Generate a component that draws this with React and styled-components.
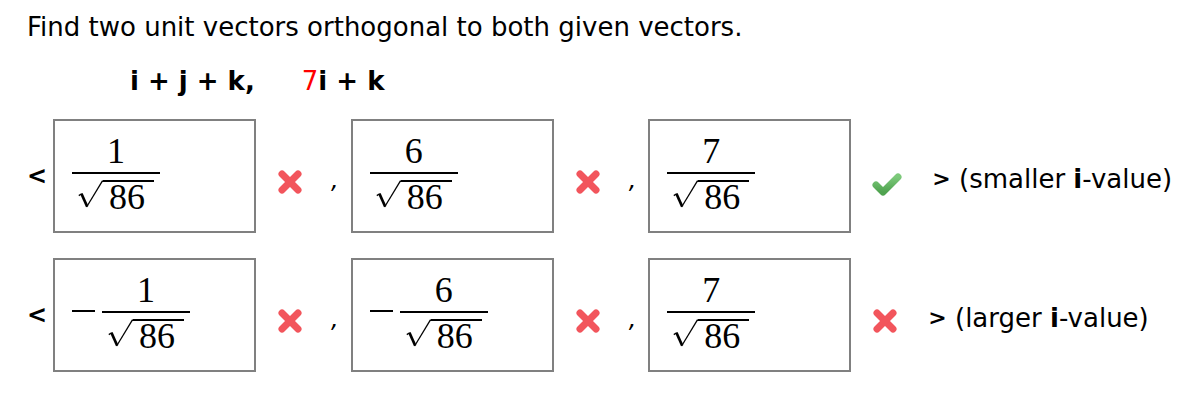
import React from "react";
import styled, { createGlobalStyle } from "styled-components";

const Global = createGlobalStyle`
  html, body { margin: 0; padding: 0; background: #fff; }
  body { font-family: "DejaVu Sans", Verdana, sans-serif; color: #000; }
`;

const Page = styled.div`
  padding: 12px 0 0 27px;
`;

const Prompt = styled.div`
  font-size: 26px;
  line-height: 30px;
`;

const Given = styled.div`
  margin-top: 24px;
  padding-left: 103px;
  font-size: 26px;
  line-height: 30px;
  font-weight: bold;
  white-space: pre;
`;

const Red = styled.span`
  color: #ff0000;
  font-weight: normal;
  margin-left: ${(p) => p.ml}px;
`;

const Rows = styled.div`
  margin-top: 23px;
  display: flex;
  flex-direction: column;
  gap: 25px;
`;

const Row = styled.div`
  display: flex;
  align-items: center;
`;

const Bracket = styled.span`
  font-size: 24px;
  font-weight: bold;
  width: 26px;
  line-height: 1;
`;

const Box = styled.div`
  box-sizing: border-box;
  width: 203px;
  height: 114px;
  border: 2px solid #808080;
  display: flex;
  align-items: center;
  padding-left: 17px;
  font-family: "Liberation Serif", "Times New Roman", serif;
`;

const Minus = styled.span`
  display: inline-block;
  width: 23px;
  height: 2px;
  background: #000;
  margin-right: 7px;
  margin-top: -8px;
`;

const Frac = styled.div`
  display: flex;
  flex-direction: column;
  align-items: center;
  margin-top: -7px;
`;

const Num = styled.div`
  font-size: 36px;
  line-height: 36px;
  padding: 0 6px 3px;
`;

const Bar = styled.div`
  align-self: stretch;
  height: 2px;
  background: #000;
`;

const Den = styled.div`
  display: flex;
  align-items: flex-start;
  padding: 6px 6px 0;
  font-size: 36px;
`;

const RadicalSign = styled.svg`
  display: block;
  flex: none;
`;

const Radicand = styled.span`
  border-top: 2px solid #000;
  padding: 0 9px 0 6px;
  line-height: 30px;
`;

const Mark = styled.span`
  display: inline-flex;
  margin-left: 21px;
  width: ${(p) => p.w}px;
  height: 26px;
  margin-top: ${(p) => p.dy || 0}px;
`;

const Comma = styled.span`
  font-size: 24px;
  margin: 8px 12px 0 28px;
  font-style: italic;
`;

const Label = styled.span`
  font-size: 26px;
  margin: 6px 0 0 30px;
  white-space: pre;
`;

const Gt = styled.span`
  font-weight: bold;
  font-size: 22px;
  position: relative;
  top: -2px;
`;

const Cross = () => (
  <svg width="26" height="26" viewBox="0 0 26 26">
    <defs>
      <filter id="soft" x="-20%" y="-20%" width="140%" height="140%">
        <feGaussianBlur stdDeviation="0.6" />
      </filter>
    </defs>
    <g stroke="#f2545b" strokeWidth="7" strokeLinecap="round" filter="url(#soft)">
      <line x1="5" y1="5" x2="21" y2="21" />
      <line x1="21" y1="5" x2="5" y2="21" />
    </g>
  </svg>
);

const Check = () => (
  <svg width="30" height="26" viewBox="0 0 30 26">
    <defs>
      <linearGradient id="gg" x1="0" y1="0" x2="0" y2="1">
        <stop offset="0" stopColor="#7cc97a" />
        <stop offset="1" stopColor="#4fa34f" />
      </linearGradient>
    </defs>
    <polyline
      points="4,15 11,22 26,7"
      fill="none"
      stroke="url(#gg)"
      strokeWidth="7"
      strokeLinecap="round"
      strokeLinejoin="round"
    />
  </svg>
);

const Radical = () => (
  <RadicalSign width="25" height="28" viewBox="0 0 25 28">
    <g stroke="#000" fill="none" strokeLinecap="butt">
      <line x1="0.8" y1="15.6" x2="3.6" y2="13.8" strokeWidth="1.3" />
      <line x1="3.4" y1="13.6" x2="9.2" y2="26.6" strokeWidth="2.6" />
      <line x1="8.6" y1="27" x2="24.6" y2="0.6" strokeWidth="1.3" />
    </g>
  </RadicalSign>
);

const Fraction = ({ n, neg }) => (
  <>
    {neg && <Minus />}
    <Frac>
      <Num>{n}</Num>
      <Bar />
      <Den>
        <Radical />
        <Radicand>86</Radicand>
      </Den>
    </Frac>
  </>
);

const rows = [
  {
    cells: [
      { n: 1, neg: false, ok: false },
      { n: 6, neg: false, ok: false },
      { n: 7, neg: false, ok: true },
    ],
    label: "smaller",
  },
  {
    cells: [
      { n: 1, neg: true, ok: false },
      { n: 6, neg: true, ok: false },
      { n: 7, neg: false, ok: false },
    ],
    label: "larger",
  },
];

export default function App() {
  return (
    <>
      <Global />
      <Page>
        <Prompt>Find two unit vectors orthogonal to both given vectors.</Prompt>
        <Given>
          {"i + j + k,"}
          <Red ml={47}>7</Red>
          {"i + k"}
        </Given>
        <Rows>
          {rows.map((r, ri) => (
            <Row key={ri}>
              <Bracket>&lt;</Bracket>
              {r.cells.map((c, ci) => (
                <React.Fragment key={ci}>
                  <Box>
                    <Fraction n={c.n} neg={c.neg} />
                  </Box>
                  <Mark w={c.ok ? 30 : 26} dy={c.ok ? 14 : 12}>
                    {c.ok ? <Check /> : <Cross />}
                  </Mark>
                  {ci < 2 && <Comma>,</Comma>}
                </React.Fragment>
              ))}
              <Label>
                <Gt>&gt;</Gt> ({r.label} <b>i</b>-value)
              </Label>
            </Row>
          ))}
        </Rows>
      </Page>
    </>
  );
}
